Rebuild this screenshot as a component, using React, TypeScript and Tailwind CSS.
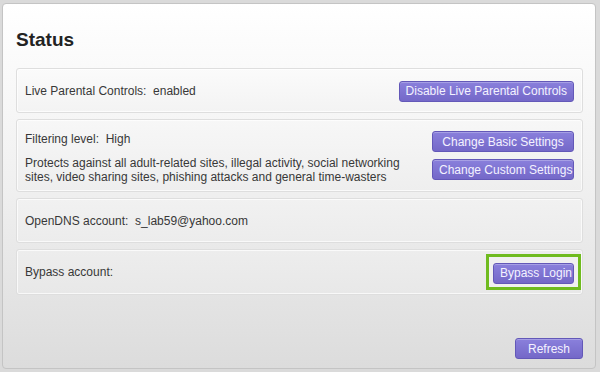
import React from "react";

function PurpleButton({ children, className = "" }: { children: React.ReactNode; className?: string }) {
  return (
    <button
      className={
        "h-[21px] px-[6px] whitespace-nowrap rounded-[3px] border border-[#6358b8] bg-gradient-to-b from-[#8a80dc] to-[#7468c8] text-[12px] leading-none text-[#f4f2ff] shadow-[inset_0_1px_0_rgba(255,255,255,0.25)] " +
        className
      }
    >
      {children}
    </button>
  );
}

function Box({ children, className = "" }: { children: React.ReactNode; className?: string }) {
  return (
    <div
      className={
        "rounded-[3px] border border-[#dedede] shadow-[inset_0_0_0_1px_rgba(255,255,255,0.7)] " + className
      }
    >
      {children}
    </div>
  );
}

export default function App() {
  return (
    <div
      className="w-[600px] h-[372px] bg-[#dadada] pt-[3px] pl-[2px]"
      style={{ fontFamily: '"Liberation Sans", Arial, sans-serif' }}
    >
      <div className="w-[594px] h-[366px] rounded-[4px] border border-[#c4c4c4] bg-gradient-to-b from-[#ffffff] via-[#f0f0f0] to-[#dcdcdc] pl-[13px] pr-[12px] flex flex-col">
        <h1 className="mt-[26px] h-[38px] text-[19px] font-bold text-[#222] leading-none">Status</h1>

        <div className="flex flex-col gap-[6px]">
          <Box className="h-[45px] bg-gradient-to-b from-[#fbfbfb] to-[#f3f3f3] flex items-center justify-between pl-[8px] pr-[8px]">
            <span className="text-[12px] text-[#383838]">Live Parental Controls:&nbsp; enabled</span>
            <PurpleButton className="mt-[1px]">Disable Live Parental Controls</PurpleButton>
          </Box>

          <Box className="h-[73px] bg-gradient-to-b from-[#f7f7f7] to-[#eeeeee] flex justify-between pl-[8px] pr-[8px]">
            <div className="text-[12px] text-[#383838] pt-[12px]">
              <div className="leading-[14px]">Filtering level:&nbsp; High</div>
              <div className="mt-[10px] leading-[14px] w-[400px]">
                Protects against all adult-related sites, illegal activity, social networking sites, video sharing sites, phishing attacks and general time-wasters
              </div>
            </div>
            <div className="flex flex-col gap-[7px] pt-[11px] w-[142px]">
              <PurpleButton className="w-full">Change Basic Settings</PurpleButton>
              <PurpleButton className="w-full">Change Custom Settings</PurpleButton>
            </div>
          </Box>

          <Box className="h-[45px] bg-gradient-to-b from-[#f1f1f1] to-[#ececec] flex items-center pl-[8px]">
            <span className="text-[12px] text-[#383838]">OpenDNS account:&nbsp; s_lab59@yahoo.com</span>
          </Box>

          <Box className="h-[46px] bg-gradient-to-b from-[#ededed] to-[#e8e8e8] flex items-center justify-between pl-[8px] pr-[1px]">
            <span className="text-[12px] text-[#383838]">Bypass account:</span>
            <div className="border-[3px] border-[#6fbb1f] bg-[#f0f0f0] px-[4px] py-[3px]">
              <PurpleButton className="w-[81px]">Bypass Login</PurpleButton>
            </div>
          </Box>
        </div>

        <div className="flex-1" />
        <div className="flex justify-end pb-[9px]">
          <PurpleButton className="w-[68px]">Refresh</PurpleButton>
        </div>
      </div>
    </div>
  );
}
